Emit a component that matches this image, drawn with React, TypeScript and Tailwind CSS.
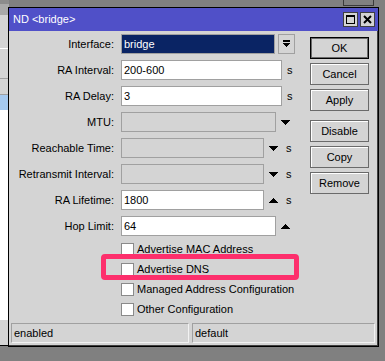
import type { ReactNode } from "react";

function Tri({ up }: { up?: boolean }) {
  return (
    <svg width="9" height="5" viewBox="0 0 9 5" shapeRendering="crispEdges">
      {up ? (
        <polygon points="0,5 9,5 4.5,0" fill="#000" />
      ) : (
        <polygon points="0,0 9,0 4.5,5" fill="#000" />
      )}
    </svg>
  );
}

function Row({ label, children }: { label: string; children: ReactNode }) {
  return (
    <div className="flex items-center h-[20px]">
      <div className="w-[105px] mr-[7px] text-right whitespace-nowrap">{label}</div>
      {children}
    </div>
  );
}

function Input({ w, value, disabled }: { w: string; value?: string; disabled?: boolean }) {
  return (
    <div
      className={
        "h-[20px] border border-[#a0a0a0] px-[2px] flex items-center " +
        w +
        (disabled ? " bg-[#d4d4d4]" : " bg-white")
      }
    >
      {value}
    </div>
  );
}

function Check({ label }: { label: string }) {
  return (
    <div className="flex items-center h-[20px] pl-[112px]">
      <div className="w-[13px] h-[13px] bg-white border border-[#8a8a8a] mr-[3px]" />
      <span className="whitespace-nowrap">{label}</span>
    </div>
  );
}

function Btn({ children, def, className }: { children: ReactNode; def?: boolean; className?: string }) {
  return (
    <div
      className={
        "h-[22px] w-[59px] flex items-center justify-center bg-[#d4d4d4] border " +
        (def
          ? "border-black shadow-[inset_0_0_0_1px_#6a6a6a]"
          : "border-[#6a6a6a] shadow-[inset_1px_1px_0_#ffffff]") +
        (className ? " " + className : "")
      }
    >
      {children}
    </div>
  );
}

export default function App() {
  return (
    <div className="relative w-[385px] h-[361px] overflow-hidden bg-[#808080] text-[11px] text-black font-['Liberation_Sans',Arial,sans-serif]">
      {/* main window behind, left edge */}
      <div className="absolute left-0 top-0 w-[9px] flex flex-col">
        <div className="h-[4px] bg-[#8c8c8c]" />
        <div className="h-[11px] bg-[#a9a9a9]" />
        <div className="h-[33px] bg-[#d4d4d4]" />
        <div className="h-[1px] bg-white" />
        <div className="h-[29px] bg-[#d4d4d4]" />
        <div className="h-[17px] bg-[#d4d4d4] border-y border-[#a0a0a0]" />
        <div className="h-[15px] bg-[#a6caf0]" />
        <div className="h-[210px] bg-white" />
        <div className="h-[25px] bg-[#d4d4d4]" />
        <div className="h-[1px] bg-black" />
      </div>
      <div className="absolute left-[343px] top-0 w-[31px] h-[6px] border-x border-b border-[#3a3a3a]" />

      {/* ND dialog */}
      <div className="absolute left-[8px] top-[7px] w-[371px] h-[340px] border border-black flex flex-col">
        <div className="h-[23px] bg-[#5050c8] flex items-center pl-[4px] pr-[3px] text-white">
          <span>ND &lt;bridge&gt;</span>
          <div className="ml-auto flex gap-[2px]">
            <div className="w-[15px] h-[15px] bg-[#d4d4d4] border border-[#404040] flex items-center justify-center">
              <div className="w-[9px] h-[9px] border border-black border-t-2" />
            </div>
            <div className="w-[15px] h-[15px] bg-[#d4d4d4] border border-[#404040] flex items-center justify-center">
              <svg width="9" height="9" viewBox="0 0 9 9">
                <path d="M1 1 L8 8 M8 1 L1 8" stroke="#000" strokeWidth="2" />
              </svg>
            </div>
          </div>
        </div>

        <div className="flex-1 bg-[#d4d4d4] border-r border-b border-[#404040] flex flex-col">
          <div className="flex flex-1">
            <div className="w-[290px] pt-[3px] flex flex-col">
              <div className="flex flex-col gap-[6px]">
                <Row label="Interface:">
                  <div className="h-[20px] w-[154px] border border-[#a0a0a0] bg-[#0a2464] text-white px-[2px] flex items-center">
                    bridge
                  </div>
                  <div className="ml-[3px] w-[17px] h-[20px] border border-[#a0a0a0] bg-[#d4d4d4] flex items-center justify-center">
                    <svg width="7" height="8" viewBox="0 0 7 8" shapeRendering="crispEdges">
                      <rect x="0" y="0" width="7" height="2" fill="#000" />
                      <polygon points="0,3 7,3 3.5,7.5" fill="#000" />
                    </svg>
                  </div>
                </Row>
                <Row label="RA Interval:">
                  <Input w="w-[161px]" value="200-600" />
                  <span className="ml-[5px]">s</span>
                </Row>
                <Row label="RA Delay:">
                  <Input w="w-[161px]" value="3" />
                  <span className="ml-[5px]">s</span>
                </Row>
                <Row label="MTU:">
                  <Input w="w-[155px]" disabled />
                  <span className="ml-[5px] flex"><Tri /></span>
                </Row>
                <Row label="Reachable Time:">
                  <Input w="w-[143px]" disabled />
                  <span className="ml-[5px] flex"><Tri /></span>
                  <span className="ml-[8px]">s</span>
                </Row>
                <Row label="Retransmit Interval:">
                  <Input w="w-[143px]" disabled />
                  <span className="ml-[5px] flex"><Tri /></span>
                  <span className="ml-[8px]">s</span>
                </Row>
                <Row label="RA Lifetime:">
                  <Input w="w-[143px]" value="1800" />
                  <span className="ml-[5px] flex"><Tri up /></span>
                  <span className="ml-[8px]">s</span>
                </Row>
                <Row label="Hop Limit:">
                  <Input w="w-[155px]" value="64" />
                  <span className="ml-[5px] flex"><Tri up /></span>
                </Row>
              </div>
              <div className="mt-[3px] flex flex-col">
                <Check label="Advertise MAC Address" />
                <Check label="Advertise DNS" />
                <Check label="Managed Address Configuration" />
                <Check label="Other Configuration" />
              </div>
            </div>

            <div className="ml-[11px] pt-[6px] flex flex-col gap-[4px]">
              <Btn def>OK</Btn>
              <Btn>Cancel</Btn>
              <Btn>Apply</Btn>
              <Btn className="mt-[5px]">Disable</Btn>
              <Btn>Copy</Btn>
              <Btn>Remove</Btn>
            </div>
          </div>

          <div className="flex gap-[3px] pl-[2px] mb-[2px]">
            <div className="w-[178px] h-[20px] border border-[#a0a0a0] border-b-[#f2f2f2] border-r-[#f2f2f2] pl-[2px] flex items-center">
              enabled
            </div>
            <div className="w-[183px] h-[20px] border border-[#a0a0a0] border-b-[#f2f2f2] border-r-[#f2f2f2] pl-[2px] flex items-center">
              default
            </div>
          </div>
        </div>
      </div>

      {/* highlight annotation */}
      <div className="absolute left-[101px] top-[254px] w-[198px] h-[26px] border-[5px] border-[#fd2f6c] rounded-[4px]" />
    </div>
  );
}
